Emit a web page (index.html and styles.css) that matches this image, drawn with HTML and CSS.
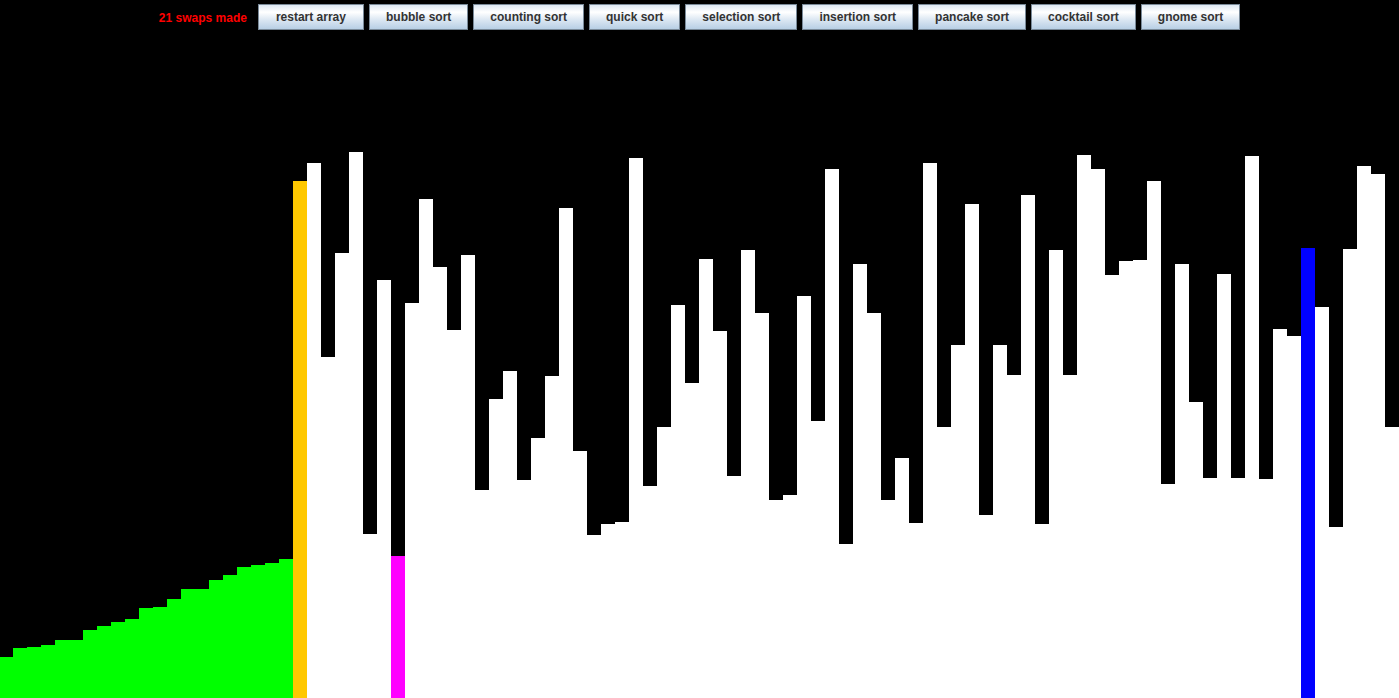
FILE: index.html
```html
<!DOCTYPE html>
<html>
<head>
<meta charset="utf-8">
<title>Sorting visualizer</title>
<link rel="stylesheet" href="styles.css">
</head>
<body>
<div class="app">
  <div class="toolbar">
    <span class="swaps">21 swaps made</span>
    <button class="btn btn-wide">restart array</button>
    <button class="btn">bubble sort</button>
    <button class="btn">counting sort</button>
    <button class="btn">quick sort</button>
    <button class="btn">selection sort</button>
    <button class="btn">insertion sort</button>
    <button class="btn">pancake sort</button>
    <button class="btn">cocktail sort</button>
    <button class="btn">gnome sort</button>
  </div>
  <div class="chart">
    <div class="bar sorted" style="height:41px"></div>
    <div class="bar sorted" style="height:50px"></div>
    <div class="bar sorted" style="height:51px"></div>
    <div class="bar sorted" style="height:53px"></div>
    <div class="bar sorted" style="height:58px"></div>
    <div class="bar sorted" style="height:58px"></div>
    <div class="bar sorted" style="height:68px"></div>
    <div class="bar sorted" style="height:72px"></div>
    <div class="bar sorted" style="height:76px"></div>
    <div class="bar sorted" style="height:79px"></div>
    <div class="bar sorted" style="height:90px"></div>
    <div class="bar sorted" style="height:91px"></div>
    <div class="bar sorted" style="height:99px"></div>
    <div class="bar sorted" style="height:109px"></div>
    <div class="bar sorted" style="height:109px"></div>
    <div class="bar sorted" style="height:118px"></div>
    <div class="bar sorted" style="height:123px"></div>
    <div class="bar sorted" style="height:131px"></div>
    <div class="bar sorted" style="height:133px"></div>
    <div class="bar sorted" style="height:135px"></div>
    <div class="bar sorted" style="height:139px"></div>
    <div class="bar current" style="height:517px"></div>
    <div class="bar" style="height:535px"></div>
    <div class="bar" style="height:341px"></div>
    <div class="bar" style="height:445px"></div>
    <div class="bar" style="height:546px"></div>
    <div class="bar" style="height:164px"></div>
    <div class="bar" style="height:418px"></div>
    <div class="bar minimum" style="height:142px"></div>
    <div class="bar" style="height:395px"></div>
    <div class="bar" style="height:499px"></div>
    <div class="bar" style="height:431px"></div>
    <div class="bar" style="height:368px"></div>
    <div class="bar" style="height:443px"></div>
    <div class="bar" style="height:208px"></div>
    <div class="bar" style="height:299px"></div>
    <div class="bar" style="height:327px"></div>
    <div class="bar" style="height:218px"></div>
    <div class="bar" style="height:260px"></div>
    <div class="bar" style="height:322px"></div>
    <div class="bar" style="height:490px"></div>
    <div class="bar" style="height:247px"></div>
    <div class="bar" style="height:163px"></div>
    <div class="bar" style="height:174px"></div>
    <div class="bar" style="height:176px"></div>
    <div class="bar" style="height:540px"></div>
    <div class="bar" style="height:212px"></div>
    <div class="bar" style="height:271px"></div>
    <div class="bar" style="height:393px"></div>
    <div class="bar" style="height:315px"></div>
    <div class="bar" style="height:439px"></div>
    <div class="bar" style="height:367px"></div>
    <div class="bar" style="height:222px"></div>
    <div class="bar" style="height:448px"></div>
    <div class="bar" style="height:385px"></div>
    <div class="bar" style="height:198px"></div>
    <div class="bar" style="height:203px"></div>
    <div class="bar" style="height:402px"></div>
    <div class="bar" style="height:277px"></div>
    <div class="bar" style="height:529px"></div>
    <div class="bar" style="height:154px"></div>
    <div class="bar" style="height:434px"></div>
    <div class="bar" style="height:385px"></div>
    <div class="bar" style="height:198px"></div>
    <div class="bar" style="height:240px"></div>
    <div class="bar" style="height:175px"></div>
    <div class="bar" style="height:535px"></div>
    <div class="bar" style="height:271px"></div>
    <div class="bar" style="height:353px"></div>
    <div class="bar" style="height:494px"></div>
    <div class="bar" style="height:183px"></div>
    <div class="bar" style="height:353px"></div>
    <div class="bar" style="height:323px"></div>
    <div class="bar" style="height:503px"></div>
    <div class="bar" style="height:174px"></div>
    <div class="bar" style="height:448px"></div>
    <div class="bar" style="height:323px"></div>
    <div class="bar" style="height:543px"></div>
    <div class="bar" style="height:529px"></div>
    <div class="bar" style="height:423px"></div>
    <div class="bar" style="height:437px"></div>
    <div class="bar" style="height:438px"></div>
    <div class="bar" style="height:517px"></div>
    <div class="bar" style="height:214px"></div>
    <div class="bar" style="height:434px"></div>
    <div class="bar" style="height:296px"></div>
    <div class="bar" style="height:220px"></div>
    <div class="bar" style="height:424px"></div>
    <div class="bar" style="height:220px"></div>
    <div class="bar" style="height:542px"></div>
    <div class="bar" style="height:219px"></div>
    <div class="bar" style="height:369px"></div>
    <div class="bar" style="height:362px"></div>
    <div class="bar scanning" style="height:450px"></div>
    <div class="bar" style="height:391px"></div>
    <div class="bar" style="height:171px"></div>
    <div class="bar" style="height:449px"></div>
    <div class="bar" style="height:532px"></div>
    <div class="bar" style="height:524px"></div>
    <div class="bar" style="height:271px"></div>
  </div>
</div>
</body>
</html>
```

FILE: styles.css
```css
html, body {
  margin: 0;
  padding: 0;
  background: #000;
  overflow: hidden;
}

.app {
  width: 1399px;
  height: 698px;
  display: flex;
  flex-direction: column;
  overflow: hidden;
}

.toolbar {
  display: flex;
  justify-content: center;
  align-items: center;
  gap: 5px;
  padding-top: 4px;
  height: 26px;
  flex: none;
}

.swaps {
  color: #ff0000;
  font-family: "Liberation Sans", Arial, sans-serif;
  font-weight: bold;
  font-size: 12px;
  margin-right: 6px;
  padding-top: 1px;
}

.btn {
  box-sizing: border-box;
  height: 26px;
  padding: 1px 16px 0;
  margin: 0;
  border: 1px solid #7a8a99;
  border-radius: 0;
  background: linear-gradient(to bottom, #dde8f3 0%, #ffffff 30%, #dde8f3 60%, #b8cfe5 100%);
  color: #333333;
  font-family: "Liberation Sans", Arial, sans-serif;
  font-weight: bold;
  font-size: 12px;
  line-height: 23px;
  white-space: nowrap;
}

.btn-wide {
  padding: 1px 17px 0;
}

.chart {
  flex: 1;
  display: flex;
  align-items: flex-end;
  margin-left: -1px;
  width: 1400px;
}

.bar {
  width: 14px;
  flex: none;
  background: #ffffff;
}

.bar.sorted {
  background: #00ff00;
}

.bar.current {
  background: #ffc800;
}

.bar.minimum {
  background: #ff00ff;
}

.bar.scanning {
  background: #0000ff;
}
```
